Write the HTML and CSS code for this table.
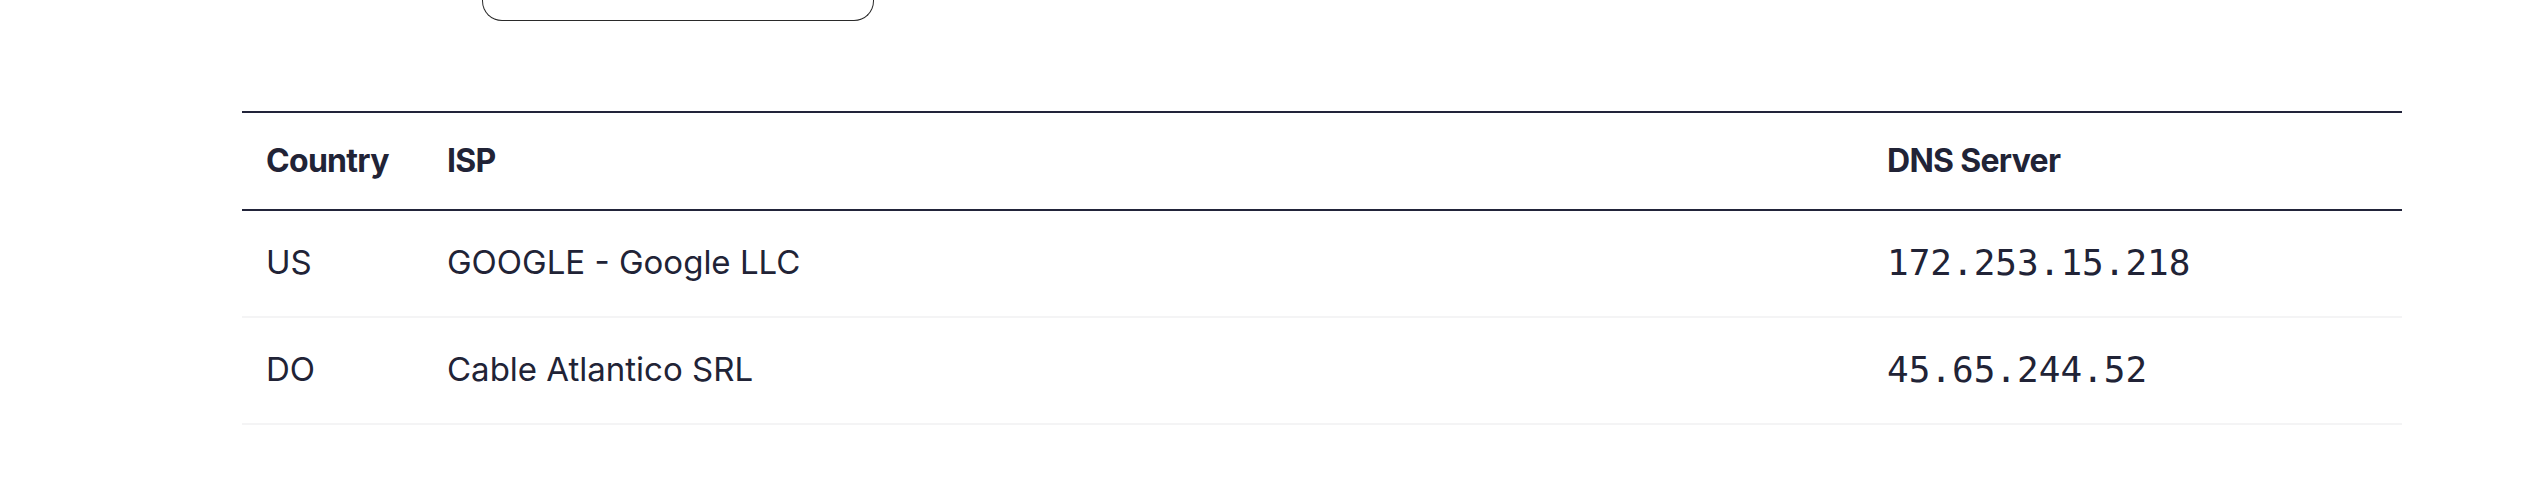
FILE: index.html
```html
<!DOCTYPE html>
<html lang="en">
<head>
<meta charset="utf-8">
<title>DNS Leak Results</title>
<link rel="stylesheet" href="styles.css">
</head>
<body>
<div class="page">
  <div class="top-area">
    <div class="button-stub"></div>
  </div>
  <table class="results">
    <colgroup>
      <col class="col-country">
      <col class="col-isp">
      <col class="col-dns">
    </colgroup>
    <thead>
      <tr>
        <th>Country</th>
        <th>ISP</th>
        <th>DNS Server</th>
      </tr>
    </thead>
    <tbody>
      <tr>
        <td>US</td>
        <td>GOOGLE - Google LLC</td>
        <td class="mono">172.253.15.218</td>
      </tr>
      <tr>
        <td>DO</td>
        <td>Cable Atlantico SRL</td>
        <td class="mono">45.65.244.52</td>
      </tr>
    </tbody>
  </table>
</div>
</body>
</html>
```

FILE: styles.css
```css
html, body {
  margin: 0;
  padding: 0;
  background: #ffffff;
}

body {
  font-family: Inter, "Liberation Sans", sans-serif;
  color: #212336;
}

.page {
  padding: 0 144px 0 242px;
}

.top-area {
  padding-left: 240px;
  height: 111px;
}

.button-stub {
  width: 390px;
  height: 20px;
  border: 1px solid #2a2a2a;
  border-top: none;
  border-radius: 0 0 20px 20px;
}

.results {
  width: 2160px;
  border-collapse: collapse;
  table-layout: fixed;
  border-top: 2px solid #22243a;
}

.col-country { width: 181px; }
.col-isp { width: 1440px; }
.col-dns { width: 539px; }

.results th {
  text-align: left;
  font-weight: 700;
  font-size: 32px;
  letter-spacing: -0.7px;
  height: 95px;
  padding: 0 24px 1px;
  vertical-align: middle;
  border-bottom: 2px solid #22243a;
}

.results td {
  font-size: 33px;
  height: 102px;
  padding: 0 24px 3px;
  vertical-align: middle;
  border-bottom: 2px solid #f4f4f5;
}

.results td.mono {
  font-family: "DejaVu Sans Mono", monospace;
  font-size: 36px;
}
```
